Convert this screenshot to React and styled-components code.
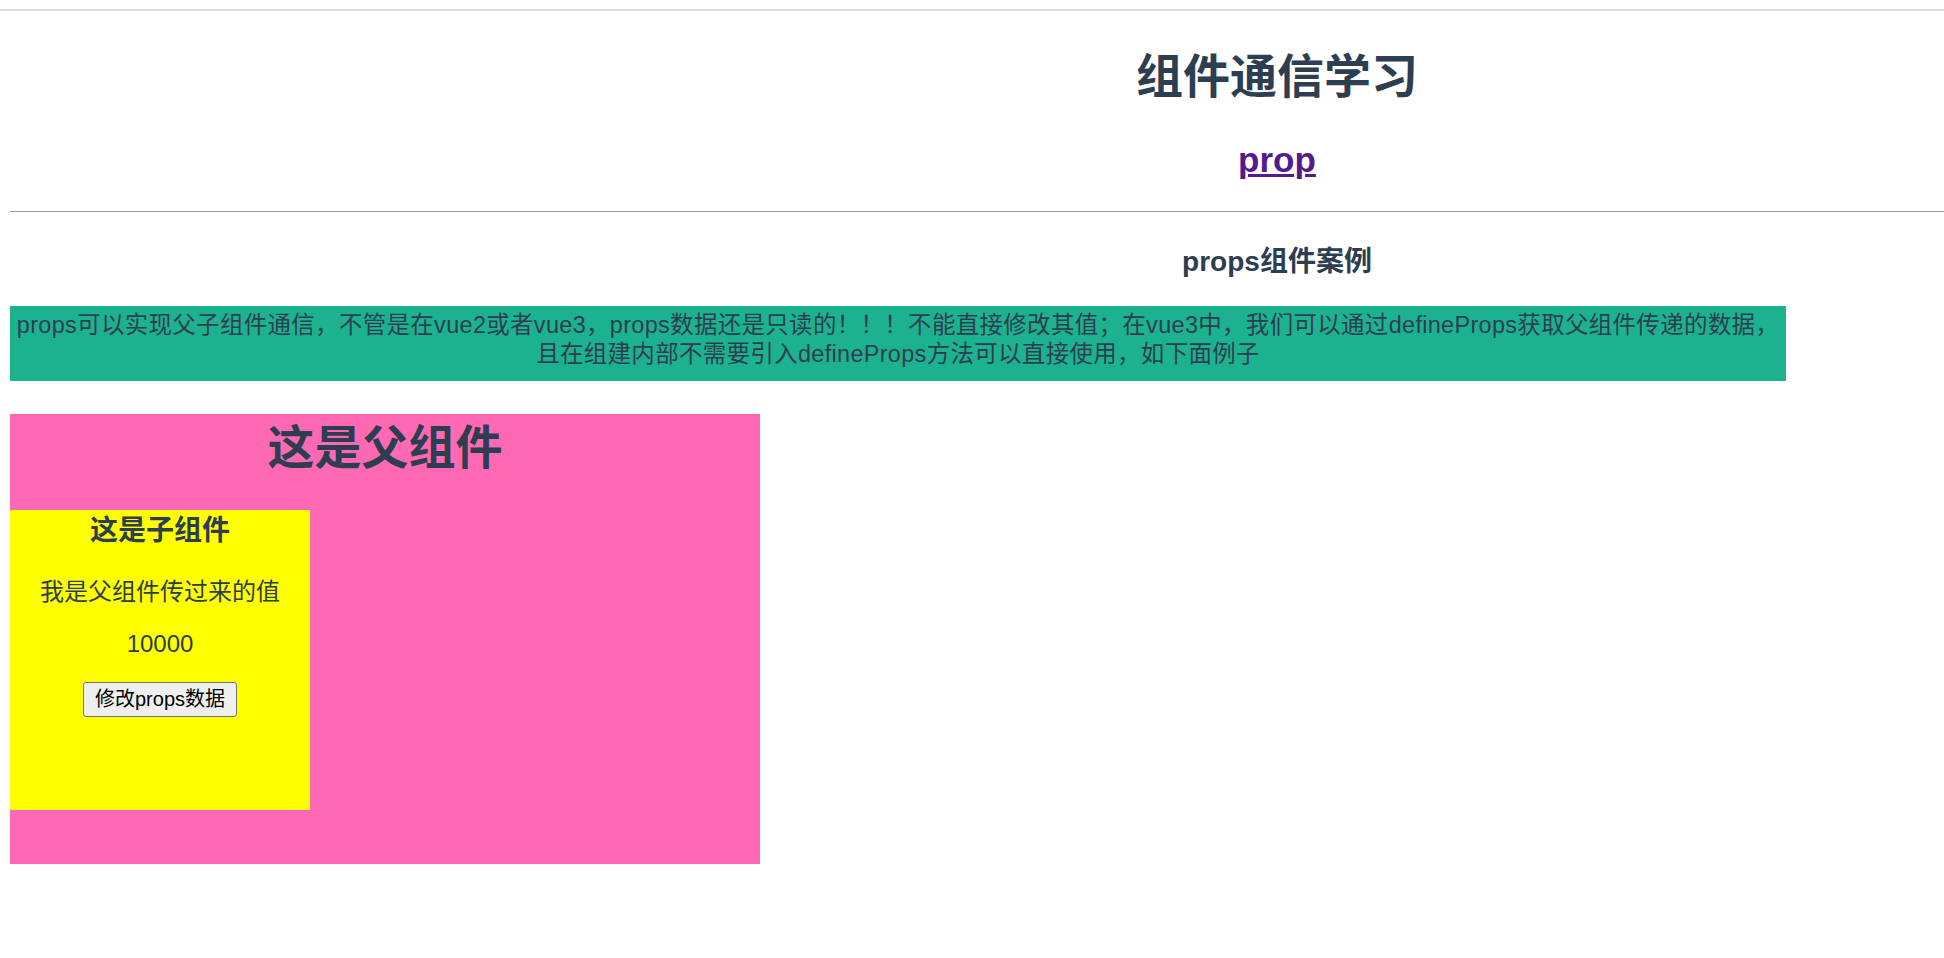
import React from "react"
import styled, { createGlobalStyle } from "styled-components"

const GlobalStyle = createGlobalStyle`
  html, body {
    margin: 0;
    overflow: hidden;
    background: #fff;
  }
  body {
    font-family: "Liberation Sans", "Noto Sans CJK SC", sans-serif;
    color: #2c3e50;
  }
`

const TopRule = styled.div`
  height: 2px;
  margin-top: 9px;
  background: #dcdcdc;
`

const Page = styled.div`
  padding: 0 10px;
  text-align: center;
`

// the header column is wider than the window, so its centre sits right of the middle
const Header = styled.header`
  width: 2534px;
`

const Title = styled.h1`
  margin: ${(p) => p.$top || 0}px 0 0;
  font-size: 47px;
  line-height: 60px;
  font-weight: 700;
`

const SubTitle = styled.h2`
  margin: 30px 0 0;
  font-size: 35px;
  line-height: 46px;
  font-weight: 700;
`

const NavLink = styled.a`
  color: #551a8b;
  text-decoration: underline;
  text-decoration-thickness: 3px;
`

const Divider = styled.hr`
  margin: 28px 0 0;
  border: 0;
  border-top: 1px solid #9b9b9b;
  height: 0;
`

const Section = styled.h3`
  margin: ${(p) => p.$top || 0}px 0 0;
  font-size: 28px;
  line-height: 36px;
  font-weight: 700;
`

const Notice = styled.div`
  box-sizing: border-box;
  width: 1776px;
  height: 75px;
  margin-top: 26px;
  padding-top: 5px;
  background: #1db28f;
  font-size: 23.5px;
  line-height: 29px;
  letter-spacing: 0.3px;
  white-space: nowrap;
  text-align: center;
`

const ParentBox = styled.div`
  width: 750px;
  height: 450px;
  margin-top: 33px;
  background: #ff69b4;
  overflow: hidden;
`

const ChildBox = styled.div`
  width: 300px;
  height: 300px;
  margin-top: 32px;
  background: #ffff00;
  overflow: hidden;
`

const Text = styled.p`
  margin: ${(p) => p.$top || 0}px 0 0;
  font-size: 24px;
  line-height: 30px;
`

const Button = styled.button`
  display: block;
  box-sizing: border-box;
  height: 35px;
  margin: 23px auto 0;
  padding: 0 11px;
  font-family: "Liberation Sans", "Noto Sans CJK SC", sans-serif;
  font-size: 20px;
  line-height: 25px;
  color: #000;
  background: #efefef;
  border: 1px solid #767676;
  border-radius: 3px;
  cursor: pointer;
`

const Child = ({ msg, num }) => {
  return (
    <ChildBox>
      <Section $top={2.5}>这是子组件</Section>
      <Text $top={28.5}>{msg}</Text>
      <Text $top={22}>{num}</Text>
      <Button>修改props数据</Button>
    </ChildBox>
  )
}

const App = () => {
  return (
    <>
      <GlobalStyle />
      <TopRule />
      <Page>
        <Header>
          <Title $top={36}>组件通信学习</Title>
          <SubTitle>
            <NavLink href="#">prop</NavLink>
          </SubTitle>
          <Divider />
          <Section $top={32}>props组件案例</Section>
        </Header>
        <Notice>
          props可以实现父子组件通信，不管是在vue2或者vue3，props数据还是只读的！！！不能直接修改其值；在vue3中，我们可以通过defineProps获取父组件传递的数据，
          <br />
          且在组建内部不需要引入defineProps方法可以直接使用，如下面例子
        </Notice>
        <ParentBox>
          <Title $top={4}>这是父组件</Title>
          <Child msg="我是父组件传过来的值" num={10000} />
        </ParentBox>
      </Page>
    </>
  )
}

export default App
